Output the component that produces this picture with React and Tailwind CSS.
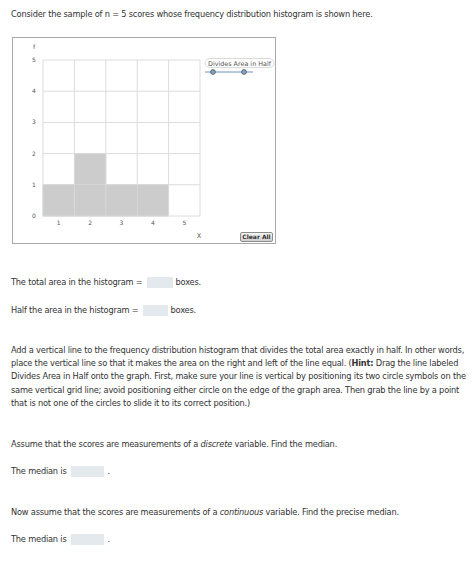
import React from 'react';

const rows = [5, 4, 3, 2, 1, 0];
const bars = [1, 2, 1, 1, 0];

function Histogram() {
  const gx = 30;
  const gy = 22;
  const cw = 31.4;
  const ch = 31.2;
  return (
    <div className="relative mt-[16px] ml-[12px] w-[264px] h-[207px] border border-[#a9a9a9] bg-white tracking-normal">
      <svg width="262" height="205" className="block" style={{ fontFamily: '"DejaVu Sans", Verdana, sans-serif' }}>
        {bars.map((h, i) =>
          Array.from({ length: h }).map((_, j) => (
            <rect
              key={`${i}-${j}`}
              x={gx + i * cw}
              y={gy + (5 - j - 1) * ch}
              width={cw}
              height={ch}
              fill="#cccccc"
              stroke="#bdbdbd"
              strokeWidth="0.8"
            />
          ))
        )}
        {[0, 1, 2, 3, 4, 5].map((i) => (
          <line key={`v${i}`} x1={gx + i * cw} y1={gy} x2={gx + i * cw} y2={gy + 5 * ch} stroke="#dcdcdc" strokeWidth="1" />
        ))}
        {[0, 1, 2, 3, 4, 5].map((i) => (
          <line key={`h${i}`} x1={gx} y1={gy + i * ch} x2={gx + 5 * cw} y2={gy + i * ch} stroke="#dcdcdc" strokeWidth="1" />
        ))}
        {rows.map((r, i) => (
          <text key={r} x="21" y={gy + i * ch + 2} fontSize="6" fill="#555" textAnchor="middle">{r}</text>
        ))}
        <text x="21" y="11" fontSize="6" fill="#555" textAnchor="middle">f</text>
        {[1, 2, 3, 4, 5].map((n, i) => (
          <text key={n} x={gx + i * cw + cw / 2} y="187" fontSize="6" fill="#555" textAnchor="middle">{n}</text>
        ))}
        <text x="186" y="200" fontSize="6.5" fill="#555" textAnchor="middle">X</text>
        <rect x="192" y="20.5" width="69" height="9" rx="4.5" fill="#fff" stroke="#d0d0d0" strokeWidth="0.8" />
        <text x="226.5" y="27.5" fontSize="6.4" fill="#555" textAnchor="middle">Divides Area in Half</text>
        <line x1="192" y1="34" x2="240" y2="34" stroke="#6f93b8" strokeWidth="1" />
        <circle cx="200" cy="34" r="2.4" fill="#8aa2b8" stroke="#3f5a73" strokeWidth="0.8" />
        <circle cx="231" cy="34" r="2.4" fill="#8aa2b8" stroke="#3f5a73" strokeWidth="0.8" />
      </svg>
      <button className="absolute left-[227px] top-[194px] w-[33px] h-[10px] rounded-[2px] border border-[#8c8c8c] bg-gradient-to-b from-[#f4f4f4] to-[#cfcfcf] text-[6px] font-bold leading-none text-[#333] flex items-center justify-center">
        Clear All
      </button>
    </div>
  );
}

export default function App() {
  return (
    <div className="w-[474px] h-[566px] bg-white text-[#333] text-[8.25px] tracking-[-0.2px] leading-[13.3px] overflow-hidden" style={{ fontFamily: '"DejaVu Sans", Verdana, sans-serif' }}>
      <p className="pt-[8px] pl-[11px]">Consider the sample of n = 5 scores whose frequency distribution histogram is shown here.</p>
      <Histogram />
      <div className="pl-[11px]">
        <p className="mt-[32px] flex items-center">
          <span>The total area in the histogram =</span>
          <span className="ml-[4px] inline-block w-[26px] h-[11px] bg-[#e3e9ed]" />
          <span className="ml-[3px]">boxes.</span>
        </p>
        <p className="mt-[14px] flex items-center">
          <span>Half the area in the histogram =</span>
          <span className="ml-[4px] inline-block w-[25px] h-[11px] bg-[#e3e9ed]" />
          <span className="ml-[3px]">boxes.</span>
        </p>
        <p className="mt-[27px] pr-[2px]">
          Add a vertical line to the frequency distribution histogram that divides the total area exactly in half. In other words, place the vertical line so that it makes the area on the right and left of the line equal. (<b className="font-bold">Hint:</b> Drag the line labeled Divides Area in Half onto the graph. First, make sure your line is vertical by positioning its two circle symbols on the same vertical grid line; avoid positioning either circle on the edge of the graph area. Then grab the line by a point that is not one of the circles to slide it to its correct position.)
        </p>
        <p className="mt-[28px]">
          Assume that the scores are measurements of a <i>discrete</i> variable. Find the median.
        </p>
        <p className="mt-[13px] flex items-center">
          <span>The median is</span>
          <span className="ml-[4px] inline-block w-[33px] h-[11px] bg-[#e3e9ed]" />
          <span className="ml-[4px]">.</span>
        </p>
        <p className="mt-[28px]">
          Now assume that the scores are measurements of a <i>continuous</i> variable. Find the precise median.
        </p>
        <p className="mt-[14px] flex items-center">
          <span>The median is</span>
          <span className="ml-[4px] inline-block w-[33px] h-[11px] bg-[#e3e9ed]" />
          <span className="ml-[4px]">.</span>
        </p>
      </div>
    </div>
  );
}
